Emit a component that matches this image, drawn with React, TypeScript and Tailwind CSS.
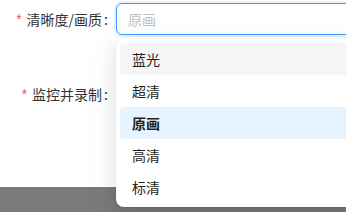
import React from 'react';

// Opciones de calidad del desplegable
const opciones = [
  { label: '蓝光', estado: 'hover' },
  { label: '超清', estado: '' },
  { label: '原画', estado: 'selected' },
  { label: '高清', estado: '' },
  { label: '标清', estado: '' },
];

const Etiqueta: React.FC<{ texto: string }> = ({ texto }) => (
  <label className="w-[116px] shrink-0 flex items-center justify-end text-sm text-[#333] leading-8">
    <span className="mr-[5px] text-[#ff4d4f] text-sm leading-none font-['Liberation_Sans',sans-serif]">*</span>
    <span>{texto}</span>
    <span className="ml-[2px] mr-2">:</span>
  </label>
);

function App() {
  return (
    <div className="relative w-[346px] h-[212px] overflow-hidden bg-white font-['Noto_Sans_CJK_SC',sans-serif]">
      {/* Cuerpo del diálogo */}
      <div className="h-[187px] bg-white pt-[3px]">
        <div className="flex items-center h-8">
          <Etiqueta texto="清晰度/画质" />
          <div className="h-8 w-[260px] shrink-0 rounded-md border border-[#4096ff] shadow-[0_0_0_2px_rgba(5,145,255,0.1)] flex items-center pl-[11px] text-sm text-[#bfbfbf]">
            原画
          </div>
        </div>
        <div className="flex items-center h-8 mt-[43px]">
          <Etiqueta texto="监控并录制" />
        </div>
      </div>

      {/* Máscara */}
      <div className="h-[25px] bg-[#7a7a7a]" />

      {/* Desplegable */}
      <div className="absolute left-[116px] top-[39px] w-[260px] p-1 rounded-lg bg-white shadow-[0_6px_16px_0_rgba(0,0,0,0.08),0_3px_6px_-4px_rgba(0,0,0,0.12),0_9px_28px_8px_rgba(0,0,0,0.05)]">
        {opciones.map((o) => (
          <div
            key={o.label}
            className={`h-8 px-3 flex items-center rounded text-sm ${
              o.estado === 'hover'
                ? 'bg-[#f5f5f5] text-[#1f1f1f]'
                : o.estado === 'selected'
                ? 'bg-[#e6f4ff] text-[#1f1f1f] font-semibold'
                : 'text-[#1f1f1f]'
            }`}
          >
            {o.label}
          </div>
        ))}
      </div>
    </div>
  );
}

export default App;
